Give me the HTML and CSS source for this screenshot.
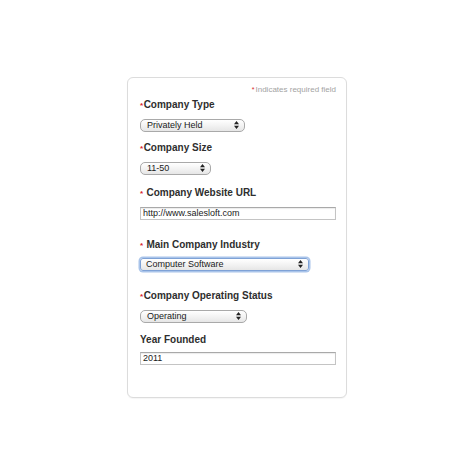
FILE: index.html
```html
<!DOCTYPE html>
<html>
<head>
<meta charset="utf-8">
<link rel="stylesheet" href="styles.css">
</head>
<body>
<form class="card">
  <p class="note"><span class="req">*</span>Indicates required field</p>

  <div class="field first">
    <label class="label"><span class="req">*</span>Company Type</label>
    <div class="select w-type"><span>Privately Held</span>
      <svg class="arrows" width="5" height="8" viewBox="0 0 5 8"><path d="M0 3.2 L2.5 0 L5 3.2 Z M0 4.8 L2.5 8 L5 4.8 Z" fill="#222"/></svg>
    </div>
  </div>

  <div class="field">
    <label class="label"><span class="req">*</span>Company Size</label>
    <div class="select w-size"><span>11-50</span>
      <svg class="arrows" width="5" height="8" viewBox="0 0 5 8"><path d="M0 3.2 L2.5 0 L5 3.2 Z M0 4.8 L2.5 8 L5 4.8 Z" fill="#222"/></svg>
    </div>
  </div>

  <div class="field gap-md">
    <label class="label"><span class="req">*</span> Company Website URL</label>
    <input class="text" type="text" value="http://www.salesloft.com">
  </div>

  <div class="field gap-lg">
    <label class="label tight"><span class="req">*</span> Main Company Industry</label>
    <div class="select w-industry focused"><span>Computer Software</span>
      <svg class="arrows" width="5" height="8" viewBox="0 0 5 8"><path d="M0 3.2 L2.5 0 L5 3.2 Z M0 4.8 L2.5 8 L5 4.8 Z" fill="#222"/></svg>
    </div>
  </div>

  <div class="field gap-lg">
    <label class="label"><span class="req">*</span>Company Operating Status</label>
    <div class="select w-status"><span>Operating</span>
      <svg class="arrows" width="5" height="8" viewBox="0 0 5 8"><path d="M0 3.2 L2.5 0 L5 3.2 Z M0 4.8 L2.5 8 L5 4.8 Z" fill="#222"/></svg>
    </div>
  </div>

  <div class="field gap-sm">
    <label class="label short">Year Founded</label>
    <input class="text" type="text" value="2011">
  </div>
</form>
</body>
</html>
```

FILE: styles.css
```css
html, body {
  margin: 0;
  padding: 0;
  background: #ffffff;
}

body {
  width: 474px;
  height: 474px;
  display: flex;
  align-items: center;
  justify-content: center;
  font-family: "Liberation Sans", Arial, sans-serif;
  color: #333333;
}

.card {
  box-sizing: border-box;
  width: 220px;
  margin: 0;
  padding: 7px 10px 32px 12px;
  border: 1px solid #dcdcdc;
  border-radius: 6px;
  background: #ffffff;
  box-shadow: 0 1px 1px rgba(0, 0, 0, 0.04);
  display: flex;
  flex-direction: column;
}

.note {
  margin: 0;
  font-size: 8px;
  line-height: 10px;
  color: #a3a3a3;
  text-align: right;
}

.req {
  color: #d8262b;
  font-weight: bold;
  font-size: 8px;
  line-height: 0;
  vertical-align: 0;
  margin-right: 0.5px;
}

.note .req {
  font-size: 7px;
  font-weight: normal;
  margin-right: 1px;
}

.field {
  display: flex;
  flex-direction: column;
  align-items: flex-start;
  margin-top: 10px;
}

.field.first { margin-top: 4px; }
.field.gap-md { margin-top: 12px; }
.field.gap-lg { margin-top: 19px; }
.field.gap-sm { margin-top: 11px; }

.label {
  display: block;
  height: 12px;
  font-size: 10px;
  line-height: 12px;
  font-weight: bold;
  color: #2e2e2e;
  margin-bottom: 8px;
}

.label.tight { margin-bottom: 7px; }
.label.short { margin-bottom: 6px; }

.select {
  box-sizing: border-box;
  height: 13px;
  display: flex;
  align-items: center;
  justify-content: space-between;
  padding: 0 5px 0 6px;
  border: 1px solid #a9a9a9;
  border-radius: 5px;
  background: linear-gradient(#ffffff, #f3f3f3 50%, #e6e6e6);
  font-size: 9px;
  line-height: 11px;
  color: #1a1a1a;
}

.select .arrows {
  flex: none;
}

.w-type { width: 105px; }
.w-size { width: 71px; }
.w-industry { width: 169px; padding-left: 5px; }
.w-status { width: 107px; }

.select.focused {
  border-color: #7fa2d6;
  border-radius: 3px;
  box-shadow: 0 0 0 1.5px #a9c4ea;
}

.text {
  box-sizing: border-box;
  width: 196px;
  height: 13px;
  margin: 0;
  padding: 0 2px;
  border: 1px solid #c4c4c4;
  border-top-color: #a9a9a9;
  border-radius: 0;
  box-shadow: inset 0 1px 1px rgba(0, 0, 0, 0.08);
  background: #ffffff;
  font-family: "Liberation Sans", Arial, sans-serif;
  font-size: 9px;
  line-height: 11px;
  color: #1a1a1a;
  outline: none;
}
```
